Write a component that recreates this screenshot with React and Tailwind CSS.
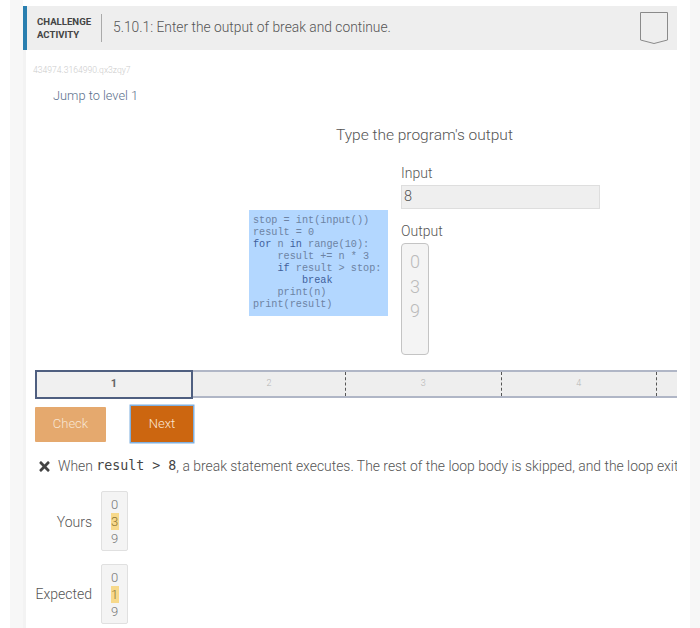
import React from 'react';
import { FaTimes } from 'react-icons/fa';

// each line is split so the keywords can be darker
const codeLines = [
  ['stop = int(input())'],
  ['result = 0'],
  [<b key="for">for</b>, ' n ', <b key="in">in</b>, ' range(10):'],
  ['    result += n * 3'],
  ['    ', <b key="if">if</b>, ' result > stop:'],
  ['        ', <b key="break">break</b>],
  ['    print(n)'],
  ['print(result)'],
];

function Bookmark() {
  return (
    <svg width="28" height="32" viewBox="0 0 28 32" fill="#eeeeee" stroke="#8a8a8a" strokeWidth="1">
      <path d="M0.5 0.5H27.5V28L14 31.5L0.5 28Z" />
    </svg>
  );
}

function Level({ n, first }) {
  return (
    <div className={`flex shrink-0 items-center justify-center border-r border-dashed border-r-[#555] text-[9px] text-[#b5b5b5] ${first ? 'w-[153px]' : 'w-[155.5px]'}`}>
      {n}
    </div>
  );
}

function DiffBox({ mark }) {
  return (
    <div className="flex h-[60px] w-[27px] flex-col items-center justify-center rounded-[2px] border border-[#e0e0e0] bg-[#f4f4f4] text-[13px] leading-[17px] text-[#777]">
      <span>0</span>
      <span className="w-[8px] bg-[#f7d98b] text-center text-[#8a7433]">{mark}</span>
      <span>9</span>
    </div>
  );
}

export default function App() {
  return (
    <div className="flex h-[628px] w-[700px] overflow-hidden bg-white font-['Roboto',sans-serif] font-light text-[#555]">
      <div className="ml-[10px] w-[13px] shrink-0 bg-[#f7f7f7]" />

      <div className="flex w-[654px] shrink-0 flex-col overflow-hidden border-t-[6px] border-t-white whitespace-nowrap">
        <div className="flex h-[44px] shrink-0 items-center border-l-4 border-l-[#2a7fb0] bg-[#eeeeee] pl-[10px] pr-[9px]">
          <div className="w-[64px] text-[9.6px] leading-[13px] font-bold text-[#444]">
            CHALLENGE
            <br />
            ACTIVITY
          </div>
          <div className="h-[28px] w-px bg-[#aaa]" />
          <div className="ml-[11px] flex-1 pb-[1px] text-[13.8px] text-[#555]">5.10.1: Enter the output of break and continue.</div>
          <Bookmark />
        </div>

        <div className="flex-1 border-l-[3px] border-l-[#f3f3f3] pl-[9px]">
          <div className="mt-[15px] -ml-[2px] text-[8.6px] leading-[10px] text-[#ccc]">434974.3164990.qx3zqy7</div>
          <div className="mt-[12px] pl-[18px] text-[12.8px] leading-[18px] text-[#5b6f8c]">Jump to level 1</div>

          <div className="mt-[18px] pl-[301px] text-[15.5px] leading-[24px] text-[#555]">Type the program's output</div>

          <div className="mt-[16px] flex items-start pl-[214px]">
            <pre className="mt-[47px] h-[106px] w-[139px] bg-[#b3d7ff] py-[5px] pl-[4px] font-['Liberation_Mono',monospace] text-[10.2px] leading-[12px] text-[#6d83a3] [&_b]:text-[#3f5f9c]">
              {codeLines.map((line, i) => (
                <div key={i}>{line}</div>
              ))}
            </pre>
            <div className="ml-[13px] flex flex-col">
              <div className="text-[14px] leading-[20px]">Input</div>
              <div className="mt-[2px] h-[24px] w-[199px] border border-[#dedede] bg-[#efefef] pl-[2px] text-[14.5px] leading-[22px]">8</div>
              <div className="mt-[12px] text-[14px] leading-[20px]">Output</div>
              <div className="mt-[2px] flex h-[112px] w-[28px] flex-col items-center rounded-[4px] border border-[#c4c4c4] bg-[#f4f4f4] pt-[6px] text-[18px] leading-[24.5px] text-[#bbb]">
                <span>0</span>
                <span>3</span>
                <span>9</span>
              </div>
            </div>
          </div>

          <div className="mt-[15px] flex h-[29px]">
            <div className="flex w-[158px] shrink-0 items-center justify-center border-[2.5px] border-[#4f5f80] bg-[#f0f0f0] text-[11px] font-bold text-[#666]">1</div>
            <div className="flex h-[28px] flex-1 border-y-2 border-y-[#b0b6c6] bg-[#eeeeee]">
              <Level n={2} first />
              <Level n={3} />
              <Level n={4} />
            </div>
          </div>

          <div className="mt-[7px] flex h-[36px] items-center">
            <div className="flex h-[35px] w-[71px] items-center justify-center rounded-[1px] bg-[#e5a96e] text-[13px] text-[#f8e6d3]">Check</div>
            <div className="ml-[25px] flex h-[36px] w-[62px] items-center justify-center bg-[#cc6610] text-[13px] text-[#fbe7d6] shadow-[0_0_0_1.5px_#7fb0e0]">Next</div>
          </div>

          <div className="mt-[14px] flex h-[20px] items-center pl-[2px] text-[13.9px]">
            <FaTimes className="mr-[6px] shrink-0 text-[15px] text-[#444]" />
            <span>When&nbsp;</span>
            <code className="font-['DejaVu_Sans_Mono',monospace] text-[13.3px] font-normal text-[#444]">result &gt; 8</code>
            <span>, a break statement executes. The rest of the loop body is skipped, and the loop exits.</span>
          </div>

          <div className="mt-[15px] flex items-center">
            <div className="w-[57px] pt-[2px] text-right text-[14px]">Yours</div>
            <div className="ml-[9px]"><DiffBox mark="3" /></div>
          </div>
          <div className="mt-[13px] flex items-center">
            <div className="w-[57px] text-right text-[14px]">Expected</div>
            <div className="ml-[9px]"><DiffBox mark="1" /></div>
          </div>
        </div>
      </div>

      <div className="ml-[13px] w-[10px] shrink-0 bg-[#f7f7f7]" />
    </div>
  );
}
